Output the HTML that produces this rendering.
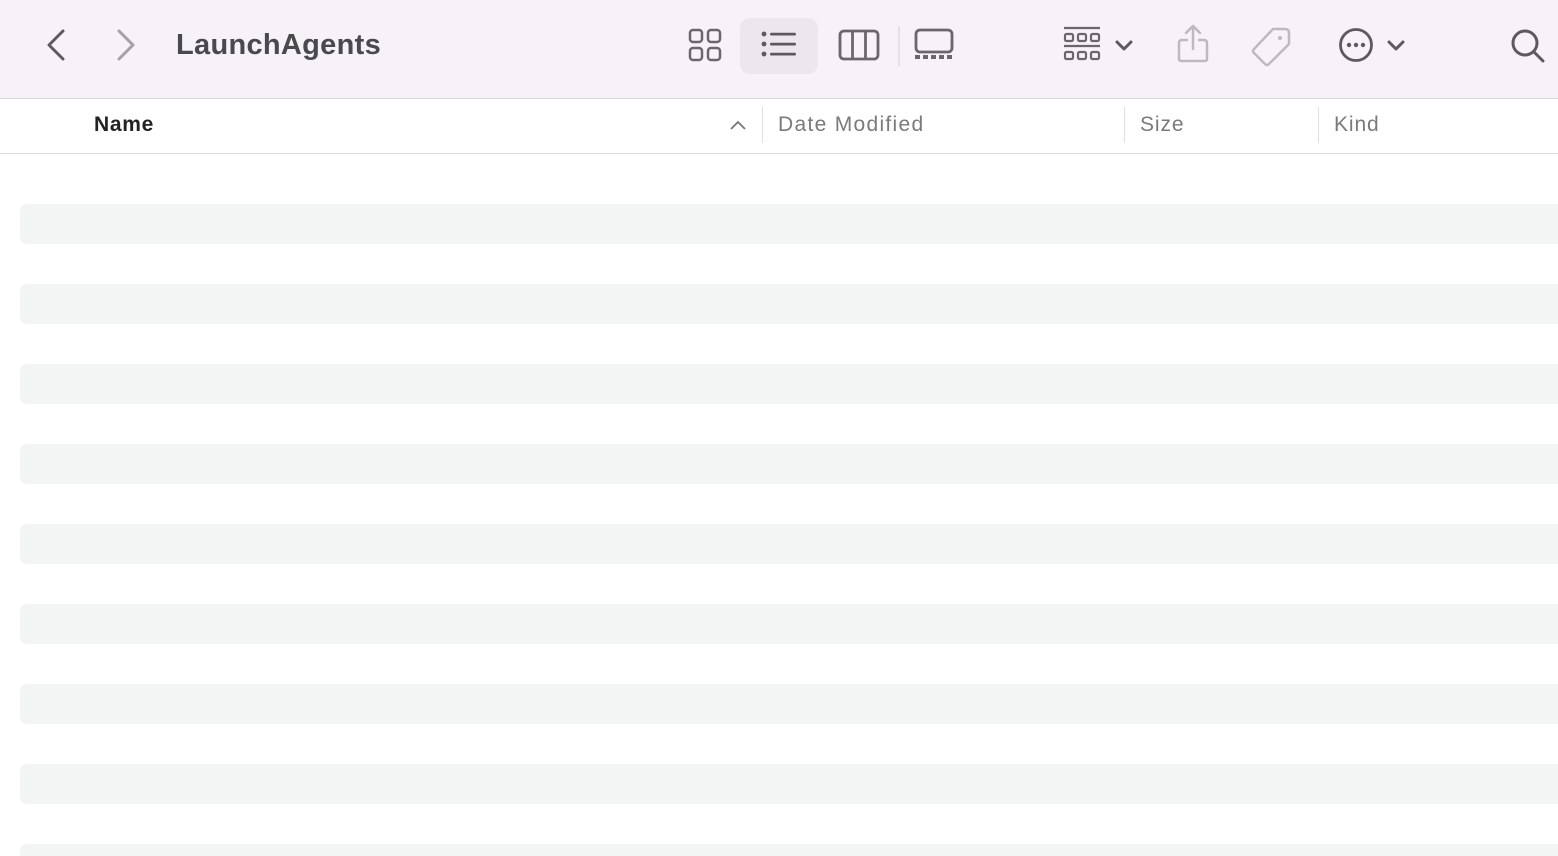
<!DOCTYPE html>
<html><head><style>
*{margin:0;padding:0;box-sizing:border-box}
html,body{width:1558px;height:856px;overflow:hidden}
body{background:#fff;font-family:"Liberation Sans",sans-serif;position:relative}
.tb{position:absolute;left:0;top:0;width:1558px;height:99px;background:#f7f2f8;border-bottom:1px solid #d9d6da}
.title{position:absolute;left:176px;top:29px;font-size:29px;font-weight:bold;color:#4a4a4d;letter-spacing:0.3px}
svg{position:absolute}
.hd{position:absolute;top:99px;left:0;width:1558px;height:55px;border-bottom:1px solid #dedede}
.hd span{position:absolute;top:14px;font-size:21px;color:#7a7a7a;letter-spacing:0.9px}
.sep{position:absolute;top:8px;width:1px;height:36px;background:#e0e0e0}
.row{position:absolute;left:20px;width:1538px;height:40px;background:#f3f4f4;border-radius:7px 0 0 7px}
</style></head><body>
<div class="tb">
<svg width="40" height="40" style="left:36px;top:25px" viewBox="0 0 40 40"><path d="M27 6 L13 20 L27 34" fill="none" stroke="#5c5a5e" stroke-width="3" stroke-linecap="round" stroke-linejoin="round"/></svg>
<svg width="40" height="40" style="left:106px;top:25px" viewBox="0 0 40 40"><path d="M13 6 L27 20 L13 34" fill="none" stroke="#a4a2a6" stroke-width="3" stroke-linecap="round" stroke-linejoin="round"/></svg>
<div class="title">LaunchAgents</div>
<svg width="34" height="34" style="left:688px;top:28px" viewBox="0 0 34 34" fill="none" stroke="#6a676c" stroke-width="2.5"><rect x="2" y="2" width="12" height="12" rx="3"/><rect x="20" y="2" width="12" height="12" rx="3"/><rect x="2" y="20" width="12" height="12" rx="3"/><rect x="20" y="20" width="12" height="12" rx="3"/></svg>
<div style="position:absolute;left:740px;top:18px;width:78px;height:56px;background:#ebe7ec;border-radius:10px"></div>
<svg width="40" height="30" style="left:759px;top:30px" viewBox="0 0 40 30" fill="#5c5a5e"><circle cx="5" cy="4" r="2.4"/><circle cx="5" cy="14" r="2.4"/><circle cx="5" cy="24" r="2.4"/><rect x="11" y="2.7" width="26" height="2.8" rx="1.4"/><rect x="11" y="12.7" width="26" height="2.8" rx="1.4"/><rect x="11" y="22.7" width="26" height="2.8" rx="1.4"/></svg>
<svg width="42" height="34" style="left:838px;top:28px" viewBox="0 0 42 34" fill="none" stroke="#6a676c" stroke-width="2.8"><rect x="2" y="3" width="38" height="28" rx="4"/><path d="M14.5 3V31M27.5 3V31"/></svg>
<div style="position:absolute;left:898px;top:26px;width:2px;height:40px;background:#e4e0e5"></div>
<svg width="42" height="36" style="left:913px;top:28px" viewBox="0 0 42 36"><rect x="3" y="2" width="36" height="22" rx="4" fill="none" stroke="#6a676c" stroke-width="2.8"/><g fill="#6a676c"><rect x="2" y="27" width="5" height="4"/><rect x="10" y="27" width="5" height="4"/><rect x="18" y="27" width="5" height="4"/><rect x="26" y="27" width="5" height="4"/><rect x="34" y="27" width="5" height="4"/></g></svg>
<svg width="42" height="40" style="left:1062px;top:25px" viewBox="0 0 42 40" fill="none" stroke="#6a676c" stroke-width="2.2"><path d="M2 3H38M2 21H38"/><rect x="3" y="9" width="8" height="7" rx="1.5"/><rect x="16" y="9" width="8" height="7" rx="1.5"/><rect x="29" y="9" width="8" height="7" rx="1.5"/><rect x="3" y="27" width="8" height="7" rx="1.5"/><rect x="16" y="27" width="8" height="7" rx="1.5"/><rect x="29" y="27" width="8" height="7" rx="1.5"/></svg>
<svg width="20" height="14" style="left:1114px;top:39px" viewBox="0 0 20 14"><path d="M3 3L10 10L17 3" fill="none" stroke="#5c5a5e" stroke-width="3" stroke-linecap="round" stroke-linejoin="round"/></svg>
<svg width="36" height="42" style="left:1175px;top:24px" viewBox="0 0 36 42" fill="none" stroke="#bdbabe" stroke-width="2.5" stroke-linecap="round" stroke-linejoin="round"><path d="M18 2V25M11 9L18 2L25 9"/><path d="M12 16H7Q4 16 4 19V35Q4 37 7 37H29Q32 37 32 35V19Q32 16 29 16H24"/></svg>
<svg width="44" height="44" style="left:1250px;top:24px" viewBox="0 0 44 44" fill="none" stroke="#bdbabe" stroke-width="2.5" stroke-linejoin="round"><path d="M23 5H35Q39 5 39 9V20L19 40Q17 42 15 40L4 29Q2 27 4 25Z"/><circle cx="30" cy="14" r="2" fill="#bdbabe" stroke="none"/></svg>
<svg width="38" height="38" style="left:1337px;top:26px" viewBox="0 0 38 38"><circle cx="19" cy="19" r="15.5" fill="none" stroke="#5c5a5e" stroke-width="2.8"/><g fill="#5c5a5e"><circle cx="12" cy="19" r="2.2"/><circle cx="19" cy="19" r="2.2"/><circle cx="26" cy="19" r="2.2"/></g></svg>
<svg width="20" height="14" style="left:1386px;top:39px" viewBox="0 0 20 14"><path d="M3 3L10 10L17 3" fill="none" stroke="#5c5a5e" stroke-width="3" stroke-linecap="round" stroke-linejoin="round"/></svg>
<svg width="40" height="40" style="left:1507px;top:25px" viewBox="0 0 40 40" fill="none" stroke="#5c5a5e" stroke-width="3" stroke-linecap="round"><circle cx="18" cy="18" r="12"/><path d="M27 27L36 36"/></svg>
</div>
<div class="hd">
<span style="left:94px;color:#222;font-weight:bold;letter-spacing:0.7px">Name</span>
<svg width="20" height="14" style="left:728px;top:20px" viewBox="0 0 20 14"><path d="M3 10L10 3L17 10" fill="none" stroke="#777" stroke-width="1.8"/></svg>
<div class="sep" style="left:762px"></div>
<span style="left:778px;letter-spacing:1.3px">Date Modified</span>
<div class="sep" style="left:1124px"></div>
<span style="left:1140px">Size</span>
<div class="sep" style="left:1318px"></div>
<span style="left:1334px">Kind</span>
</div>
<div class="row" style="top:204px"></div>
<div class="row" style="top:284px"></div>
<div class="row" style="top:364px"></div>
<div class="row" style="top:444px"></div>
<div class="row" style="top:524px"></div>
<div class="row" style="top:604px"></div>
<div class="row" style="top:684px"></div>
<div class="row" style="top:764px"></div>
<div class="row" style="top:844px"></div>
</body></html>
